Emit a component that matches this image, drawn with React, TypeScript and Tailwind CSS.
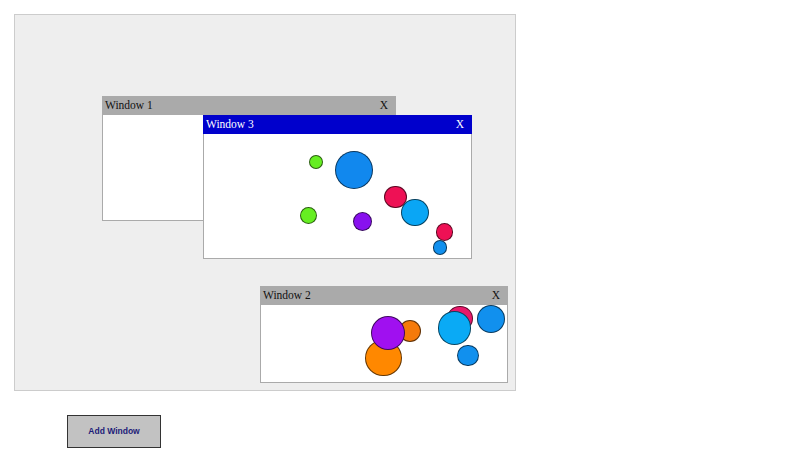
import React, { useState } from "react";

type Ball = { x: number; y: number; d: number; color: string };

type Win = {
  id: number;
  title: string;
  active: boolean;
  pos: string;
  balls: Ball[];
};

const initialWindows: Win[] = [
  {
    id: 1,
    title: "Window 1",
    active: false,
    pos: "left-[87px] top-[81px] w-[294px] h-[125px]",
    balls: [],
  },
  {
    id: 3,
    title: "Window 3",
    active: true,
    pos: "left-[188px] top-[100px] w-[269px] h-[144px]",
    balls: [
      { x: 105, y: 20.7, d: 14, color: "#66ee22" },
      { x: 131, y: 17, d: 37.5, color: "#1188ee" },
      { x: 180, y: 51.7, d: 22.7, color: "#ee1155" },
      { x: 197.3, y: 65, d: 27.4, color: "#0aa6f5" },
      { x: 96, y: 73, d: 16.6, color: "#66ee22" },
      { x: 149, y: 78.4, d: 18.6, color: "#8811ee" },
      { x: 232, y: 89.3, d: 17.4, color: "#ee1155" },
      { x: 228.7, y: 106, d: 14.6, color: "#1190ee" },
    ],
  },
  {
    id: 2,
    title: "Window 2",
    active: false,
    pos: "left-[245px] top-[271px] w-[248px] h-[97px]",
    balls: [
      { x: 104.4, y: 34.7, d: 36.6, color: "#ff8800" },
      { x: 137.7, y: 14.7, d: 22.6, color: "#f57a0a" },
      { x: 110, y: 10.7, d: 34, color: "#a010f0" },
      { x: 186.3, y: 0.6, d: 25.4, color: "#e8186a" },
      { x: 176.6, y: 6.3, d: 33.4, color: "#0aaaf5" },
      { x: 215.7, y: -0.3, d: 28, color: "#1190ee" },
      { x: 196.3, y: 39.6, d: 21.4, color: "#1190ee" },
    ],
  },
];

const serif = { fontFamily: '"Liberation Serif", "Times New Roman", serif' };

const App: React.FC = () => {
  const [windows, setWindows] = useState<Win[]>(initialWindows);

  const closeWindow = (id: number) => {
    setWindows(windows.filter((w) => w.id !== id));
  };

  const addWindow = () => {
    // new windows are not placed yet, keep the demo static
    console.log("add window");
  };

  return (
    <div className="w-[800px] h-[450px] bg-white p-[14px]">
      {/* Desktop */}
      <div className="relative w-[502px] h-[377px] bg-[#eeeeee] border border-[#cccccc] overflow-hidden">
        {windows.map((w) => (
          <div key={w.id} className={`absolute flex flex-col ${w.pos}`} style={serif}>
            {/* Title bar */}
            <div
              className={`flex items-center justify-between h-[19px] shrink-0 pl-[3px] pr-[8px] text-[11.5px] leading-none ${
                w.active ? "bg-[#0000cc] text-white" : "bg-[#aaaaaa] text-[#111111]"
              }`}
            >
              <span>{w.title}</span>
              <span className="cursor-pointer" onClick={() => closeWindow(w.id)}>
                X
              </span>
            </div>
            {/* Content */}
            <div className="relative flex-1 bg-white border-x border-b border-[#aaaaaa] overflow-hidden">
              {w.balls.map((b, i) => (
                <div
                  key={i}
                  className="absolute rounded-full border border-[#00000099]"
                  style={{ left: b.x, top: b.y, width: b.d, height: b.d, backgroundColor: b.color }}
                />
              ))}
            </div>
          </div>
        ))}
      </div>

      {/* Add Window button */}
      <button
        onClick={addWindow}
        className="mt-[24px] ml-[53px] w-[94px] h-[33px] bg-[#c2c2c2] border border-[#333333] text-[8.5px] font-bold text-[#1c1c78]"
        style={{ fontFamily: '"Liberation Sans", Arial, sans-serif' }}
      >
        Add Window
      </button>
    </div>
  );
};

export default App;
